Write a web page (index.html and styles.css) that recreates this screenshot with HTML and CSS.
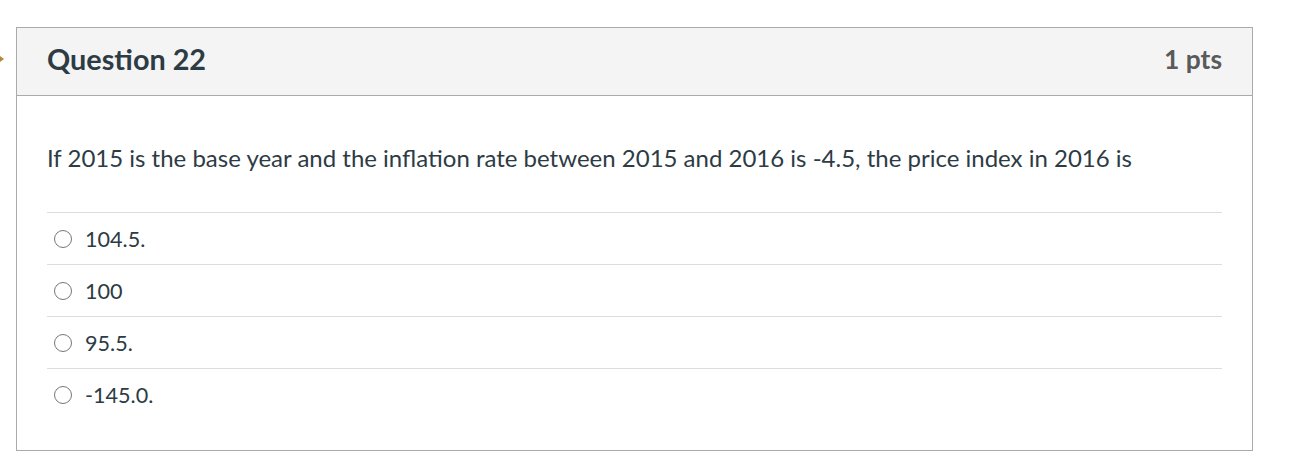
FILE: index.html
```html
<!DOCTYPE html>
<html>
<head>
<meta charset="utf-8">
<link rel="stylesheet" href="styles.css">
</head>
<body>
<div class="page">
  <span class="flag"></span>
  <div class="question">
    <div class="q-header">
      <h3 class="q-title">Question 22</h3>
      <span class="q-points">1 pts</span>
    </div>
    <div class="q-body">
      <p class="q-text">If 2015 is the base year and the inflation rate between 2015 and 2016 is -4.5, the price index in 2016 is</p>
      <ul class="answers">
        <li class="answer"><span class="radio"></span><span class="label">104.5.</span></li>
        <li class="answer"><span class="radio"></span><span class="label">100</span></li>
        <li class="answer"><span class="radio"></span><span class="label">95.5.</span></li>
        <li class="answer"><span class="radio"></span><span class="label">-145.0.</span></li>
      </ul>
    </div>
  </div>
</div>
</body>
</html>
```
FILE: styles.css
```css
* { box-sizing: border-box; }
body {
  margin: 0;
  background: #fff;
  font-family: Lato, "Open Sans", sans-serif;
  color: #2d3b45;
}
.page {
  position: relative;
  padding: 27px 0 0 16px;
}
.flag {
  position: absolute;
  left: 0;
  top: 56px;
  width: 0;
  height: 0;
  border-top: 3px solid transparent;
  border-bottom: 3px solid transparent;
  border-left: 4px solid #b08a3a;
}
.question {
  width: 1237px;
  height: 424px;
  border: 1px solid #aaaaaa;
}
.q-header {
  display: flex;
  align-items: center;
  justify-content: space-between;
  height: 68px;
  padding: 0 30px 5px;
  background: #f4f4f4;
  border-bottom: 1px solid #aaaaaa;
}
.q-title {
  margin: 0;
  font-size: 28.8px;
  font-weight: 700;
  color: #2d3b45;
}
.q-points {
  font-size: 26.4px;
  font-weight: 700;
  color: #5a5a5a;
}
.q-body {
  padding: 0 30px;
}
.q-text {
  margin: 46px 0 38px;
  font-size: 24px;
  line-height: 32px;
}
.answers {
  list-style: none;
  margin: 0;
  padding: 0;
}
.answer {
  display: flex;
  align-items: center;
  height: 52px;
  border-top: 1px solid #dddddd;
  font-size: 21.6px;
}
.radio {
  width: 18px;
  height: 18px;
  border: 1.5px solid #777;
  border-radius: 50%;
  margin-left: 7px;
  margin-right: 13px;
}
.label {
  color: #2d3b45;
}
```
